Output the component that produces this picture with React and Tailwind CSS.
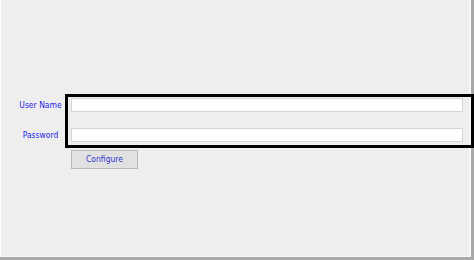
export default function App() {
  const font = { fontFamily: '"DejaVu Sans Condensed", "Liberation Sans", sans-serif' };

  return (
    <div className="w-[474px] h-[260px] bg-[#a9a9a9] pr-[3px] pb-[3px]">
      <div
        className="h-full bg-[#eeeeee] border-l border-l-white border-r-[2px] border-r-[#f6f6f6] border-b border-b-[#f6f6f6]"
        style={font}
      >
        <div className="pt-[94px] flex -mr-[5px]">
          {/* labels */}
          <div className="w-[64px] pl-[15px] pt-[4px] flex flex-col text-center text-[8.5px] text-[#1f1fe4]">
            <div className="h-[14px] leading-[14px]">User Name</div>
            <div className="h-[14px] leading-[14px] mt-[16px]">Password</div>
          </div>
          {/* highlighted box */}
          <div className="flex-1 border-[3px] border-black pl-[3px] pr-[8px] pt-[1px] pb-[3px] flex flex-col gap-[16px]">
            <input className="h-[14px] bg-white border border-[#d6d6d6] outline-none" />
            <input type="password" className="h-[14px] bg-white border border-[#d6d6d6] outline-none" />
          </div>
        </div>
        <button className="block ml-[70px] mt-[2px] w-[67px] h-[19px] bg-[#e1e1e1] border border-[#b9b9b9] text-[8.5px] text-[#3434d0] leading-none">
          Configure
        </button>
      </div>
    </div>
  );
}
